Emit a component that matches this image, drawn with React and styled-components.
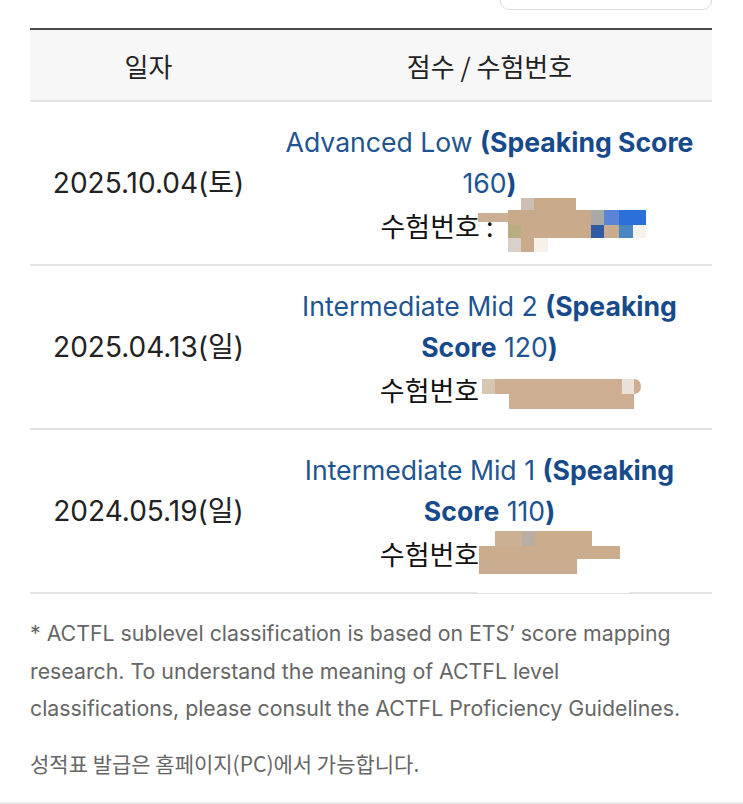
import React from 'react';
import styled, { createGlobalStyle } from 'styled-components';

const GlobalStyle = createGlobalStyle`
  html, body {
    margin: 0;
    padding: 0;
    background: #fff;
  }
  body {
    font-family: Inter, "Noto Sans CJK KR", sans-serif;
    color: #222;
    overflow: hidden;
  }
`;

const Page = styled.div`
  width: 743px;
  height: 804px;
  overflow: hidden;
`;

const Toolbar = styled.div`
  display: flex;
  justify-content: flex-end;
  padding: 0 31px 0 30px;
  height: 28px;
`;

const SelectBox = styled.div`
  width: 212px;
  height: 40px;
  margin-top: -30px;
  border: 1px solid #dcdcdc;
  border-radius: 9px;
  box-sizing: border-box;
  background: #fff;
`;

const Table = styled.table`
  margin: 0 31px 0 30px;
  width: 682px;
  border-collapse: collapse;
  table-layout: fixed;
  border-top: 2px solid #4a4a4a;
`;

const Th = styled.th`
  width: ${(p) => p.$w || 'auto'};
  height: 70px;
  padding: 0;
  background: #f7f7f7;
  border-bottom: 2px solid #e3e3e3;
  font-family: "Noto Sans CJK KR", sans-serif;
  font-size: 26px;
  font-weight: 400;
  color: #222;
  text-align: center;
`;

const Td = styled.td`
  height: 164px;
  box-sizing: border-box;
  padding: 0 8px;
  border-bottom: 2px solid #e3e3e3;
  text-align: center;
  vertical-align: middle;
  font-size: ${(p) => p.$size || 26.6}px;
  line-height: 41px;
  color: #222;
`;

const Level = styled.span`
  color: #1e5490;
`;

const Strong = styled.b`
  color: #174a8a;
  font-weight: 700;
`;

const ExamNo = styled.span`
  font-family: "Noto Sans CJK KR", sans-serif;
  font-size: 27px;
  line-height: 1;
  vertical-align: -3px;
  color: #111;
`;

const Redacted = styled.span`
  display: inline-block;
  position: relative;
  width: ${(p) => p.$w}px;
  height: 30px;
  margin-bottom: -8px;
  vertical-align: top;
`;

const Cell = styled.span.attrs((p) => ({
  style: {
    left: p.$x + 'px',
    top: p.$y + 'px',
    width: p.$w + 'px',
    height: p.$h + 'px',
    background: p.$c,
  },
}))`
  position: absolute;
  border-radius: ${(p) => (p.$round ? '0 8px 8px 0' : '0')};
`;

const Footer = styled.div`
  padding: 21px 30px 20px;
  border-bottom: 2px solid #ececec;
  color: #666;
  font-size: 21.3px;
  line-height: 37.5px;
`;

const Note = styled.p`
  margin: 0 0 17px;
  &:last-child {
    margin: 0;
    font-family: "Noto Sans CJK KR", sans-serif;
    font-size: 21px;
  }
`;

const mosaics = [
  [
    [-15, 9, 30, 9, '#cbb095'],
    [28, -6, 13, 12, '#cdbfb4'],
    [41, -6, 42, 12, '#c8aa8a'],
    [15, 6, 83, 15, '#c8aa8a'],
    [98, 6, 13, 15, '#a9aaa8'],
    [111, 6, 15, 15, '#5b84d6'],
    [126, 6, 27, 15, '#2b6fd9'],
    [15, 21, 13, 13, '#b9ad82'],
    [28, 21, 70, 13, '#c9ab8b'],
    [98, 21, 13, 13, '#2e5aa6'],
    [111, 21, 15, 13, '#c9ac8e'],
    [126, 21, 14, 13, '#4a87c1'],
    [140, 21, 13, 13, '#f8f2ea'],
    [15, 34, 13, 14, '#d9d1c9'],
    [28, 34, 13, 14, '#c9ab8b'],
    [41, 34, 14, 14, '#f8f1ea'],
  ],
  [
    [3, 11, 13, 15, '#d9c6b2'],
    [16, 11, 127, 15, '#cdae92'],
    [143, 11, 12, 15, '#e9e2d8'],
    [155, 11, 7, 15, '#cfae90', true],
    [30, 26, 125, 15, '#cdae93'],
  ],
  [
    [16, -1, 27, 15, '#cbb093'],
    [43, -1, 13, 15, '#b8aea4'],
    [56, -1, 57, 15, '#cbad8e'],
    [0, 14, 141, 13, '#cbad8e'],
    [0, 27, 98, 15, '#caad90'],
    [-2, 57, 152, 4, '#ffffff'],
  ],
];

const rows = [
  {
    date: '2025.10.04(토)',
    level: 'Advanced Low',
    first: '(Speaking Score',
    second: null,
    score: '160',
    label: '수험번호 :',
    hidden: 105,
  },
  {
    date: '2025.04.13(일)',
    level: 'Intermediate Mid 2',
    first: '(Speaking',
    second: 'Score',
    score: '120',
    label: '수험번호',
    hidden: 120,
  },
  {
    date: '2024.05.19(일)',
    level: 'Intermediate Mid 1',
    first: '(Speaking',
    second: 'Score',
    score: '110',
    label: '수험번호',
    hidden: 120,
  },
];

const App = () => (
  <Page>
    <GlobalStyle />
    <Toolbar>
      <SelectBox />
    </Toolbar>
    <Table>
      <thead>
        <tr>
          <Th $w="237px">일자</Th>
          <Th>점수 / 수험번호</Th>
        </tr>
      </thead>
      <tbody>
        {rows.map((r, i) => (
          <tr key={r.date}>
            <Td $size={28}>{r.date}</Td>
            <Td>
              <Level>{r.level}</Level> <Strong>{r.first}</Strong>
              <br />
              {r.second && (
                <>
                  <Strong>{r.second}</Strong>{' '}
                </>
              )}
              <Level>{r.score}</Level>
              <Strong>)</Strong>
              <br />
              <ExamNo>{r.label}</ExamNo>
              <Redacted $w={r.hidden}>
                {mosaics[i].map(([x, y, w, h, c, round], k) => (
                  <Cell key={k} $x={x} $y={y} $w={w} $h={h} $c={c} $round={round} />
                ))}
              </Redacted>
            </Td>
          </tr>
        ))}
      </tbody>
    </Table>
    <Footer>
      <Note>
        * ACTFL sublevel classification is based on ETS’ score mapping research. To understand the meaning of ACTFL
        level classifications, please consult the ACTFL Proficiency Guidelines.
      </Note>
      <Note>성적표 발급은 홈페이지(PC)에서 가능합니다.</Note>
    </Footer>
  </Page>
);

export default App;
